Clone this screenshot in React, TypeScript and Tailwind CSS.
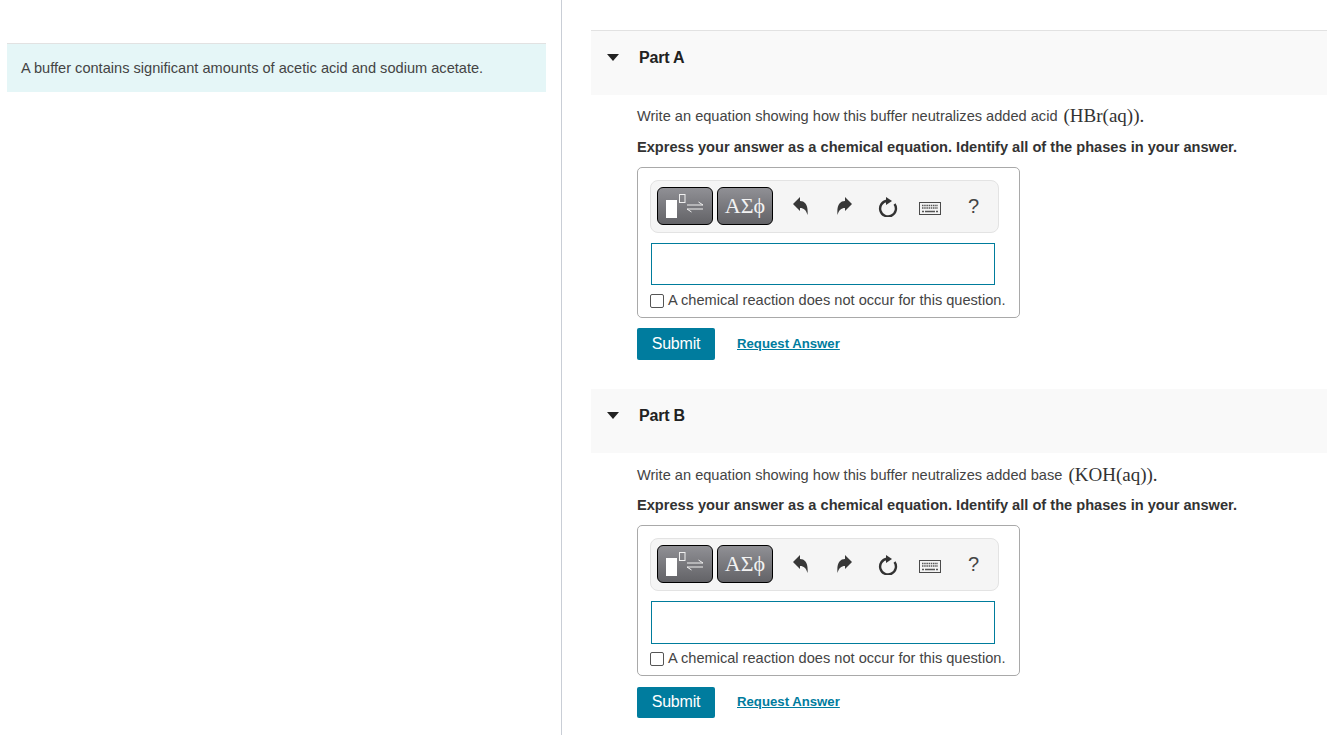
function Toolbar() {
  return (
    <div className="flex h-[53px] w-[349px] items-start rounded-[8px] border border-[#e3e3e3] bg-[#f5f5f5] pl-[6px] pt-[6px]">
      <button className="flex h-[38px] w-[56px] shrink-0 items-start rounded-[6px] border border-black bg-gradient-to-b from-[#909095] to-[#636367] pl-[8px] pt-[6px]">
        <svg width="40" height="25" viewBox="0 0 40 25">
          <rect x="0" y="6" width="11" height="18" fill="#ffffff" />
          <rect x="13.500" y="0.500" width="5.500" height="8" fill="none" stroke="#f0f0f0" strokeWidth="1" />
          <path d="M21 11h16l-4.500-3M37 15H21l4.500 3" fill="none" stroke="#f0f0f0" strokeWidth="1" />
        </svg>
      </button>
      <button className="ml-[4px] flex h-[38px] w-[56px] shrink-0 items-center justify-center rounded-[6px] border border-black bg-gradient-to-b from-[#909095] to-[#636367] text-[#f2f2f2]">
        <span className="font-['Liberation_Serif',serif] text-[22px] leading-none">ΑΣϕ</span>
      </button>
      <svg className="ml-[20px] mt-[10px] shrink-0" width="15" height="18" viewBox="0 0 15 18">
        <path d="M0 7 7 0v4c5 0 8.500 4 7.500 14C13 13 11 11 7 11v3z" fill="#383838" />
      </svg>
      <svg className="ml-[29px] mt-[10px] shrink-0" width="15" height="18" viewBox="0 0 15 18">
        <path d="M15 7 8 0v4C3 4-.5 8 .5 18 2 13 4 11 8 11v3z" fill="#383838" />
      </svg>
      <svg className="ml-[26px] mt-[9px] shrink-0" width="20" height="21" viewBox="0 0 20 21">
        <path d="M9 4.700A7.900 7.900 0 1 0 16.500 8" fill="none" stroke="#333333" strokeWidth="2.400" />
        <path d="M8 1l6 4-6 4z" fill="#333333" />
      </svg>
      <svg className="ml-[21px] mt-[15px] shrink-0" width="22" height="13" viewBox="0 0 22 13">
        <rect x="0.500" y="0.500" width="21" height="12" fill="#f4f4f4" stroke="#4a4a4a" />
        <path d="M3 3.500h16M3 6h16" stroke="#555555" strokeWidth="1.500" strokeDasharray="1.500 .7" />
        <path d="M3 9.500h2M6 9.500h10M17 9.500h2" stroke="#555555" strokeWidth="1.500" />
      </svg>
      <span className="ml-[27px] mt-[8px] text-[20px] leading-[22px] text-[#444444]">?</span>
    </div>
  );
}

function Part({ title, lead, formula, first }: { title: string; lead: string; formula: string; first?: boolean }) {
  return (
    <section className={first ? "" : "mt-[29px]"}>
      <div className={`flex bg-[#f9f9f9] ${first ? "h-[65px] border-t border-[#e2e2e2]" : "h-[64px]"}`}>
        <svg className="ml-[16px] mt-[23px]" width="12" height="7" viewBox="0 0 12 7">
          <path d="M0 0h12L6 7z" fill="#222222" />
        </svg>
        <h2 className="ml-[20px] mt-[16px] text-[16px] font-bold leading-[22px] tracking-[-0.2px] text-[#222222]">{title}</h2>
      </div>
      <div className="ml-[46px]">
        <p className={`flex h-[26px] items-center text-[14.600px] text-[#444444] ${first ? "mt-[8px]" : "mt-[9px]"}`}>
          <span className="mt-[2px]">{lead}</span>
          <span className="ml-[6px] font-['Liberation_Serif',serif] text-[19px] text-[#333333]">{formula}</span>
        </p>
        <p className={`h-[20px] text-[14.620px] font-bold leading-[20px] text-[#333333] ${first ? "mt-[8px]" : "mt-[7px]"}`}>
          Express your answer as a chemical equation. Identify all of the phases in your answer.
        </p>
        <div className="mt-[10px] h-[151px] w-[383px] rounded-[5px] border border-[#a9a9a9] pl-[12px] pt-[12px]">
          <Toolbar />
          <div className={`ml-[1px] mt-[10px] w-[344px] border border-[#007c9c] bg-white ${first ? "h-[42px]" : "h-[43px]"}`} />
          <label className={`flex h-[20px] items-center text-[14.600px] text-[#444444] ${first ? "mt-[6px]" : "mt-[5px]"}`}>
            <span className="h-[14px] w-[14px] rounded-[2px] border border-[#555555] bg-white" />
            <span className="ml-[4px]">A chemical reaction does not occur for this question.</span>
          </label>
        </div>
        <div className={`flex items-center ${first ? "mt-[10px]" : "mt-[11px]"}`}>
          <button className={`w-[78px] rounded-[2px] bg-[#007c9e] text-[16px] tracking-[-0.2px] text-white ${first ? "h-[32px]" : "h-[31px] pb-[1px]"}`}>Submit</button>
          <a className={`ml-[22px] text-[13.200px] font-bold text-[#007c9e] underline ${first ? "" : "mb-[1px]"}`}>Request Answer</a>
        </div>
      </div>
    </section>
  );
}

export default function App() {
  return (
    <div className="flex h-[735px] overflow-hidden bg-white font-['Liberation_Sans',sans-serif]">
      <aside className="w-[562px] shrink-0 border-r border-[#c9ced6] pl-[7px] pt-[43px]">
        <div className="flex h-[49px] w-[539px] items-center border-t border-[#e2e2e2] bg-[#e5f6f7] pl-[14px] pt-[2px] text-[14.600px] text-[#444444]">
          A buffer contains significant amounts of acetic acid and sodium acetate.
        </div>
      </aside>
      <main className="flex-1 pl-[29px] pt-[30px]">
        <Part first title="Part A" lead="Write an equation showing how this buffer neutralizes added acid" formula="(HBr(aq))." />
        <Part title="Part B" lead="Write an equation showing how this buffer neutralizes added base" formula="(KOH(aq))." />
      </main>
    </div>
  );
}
